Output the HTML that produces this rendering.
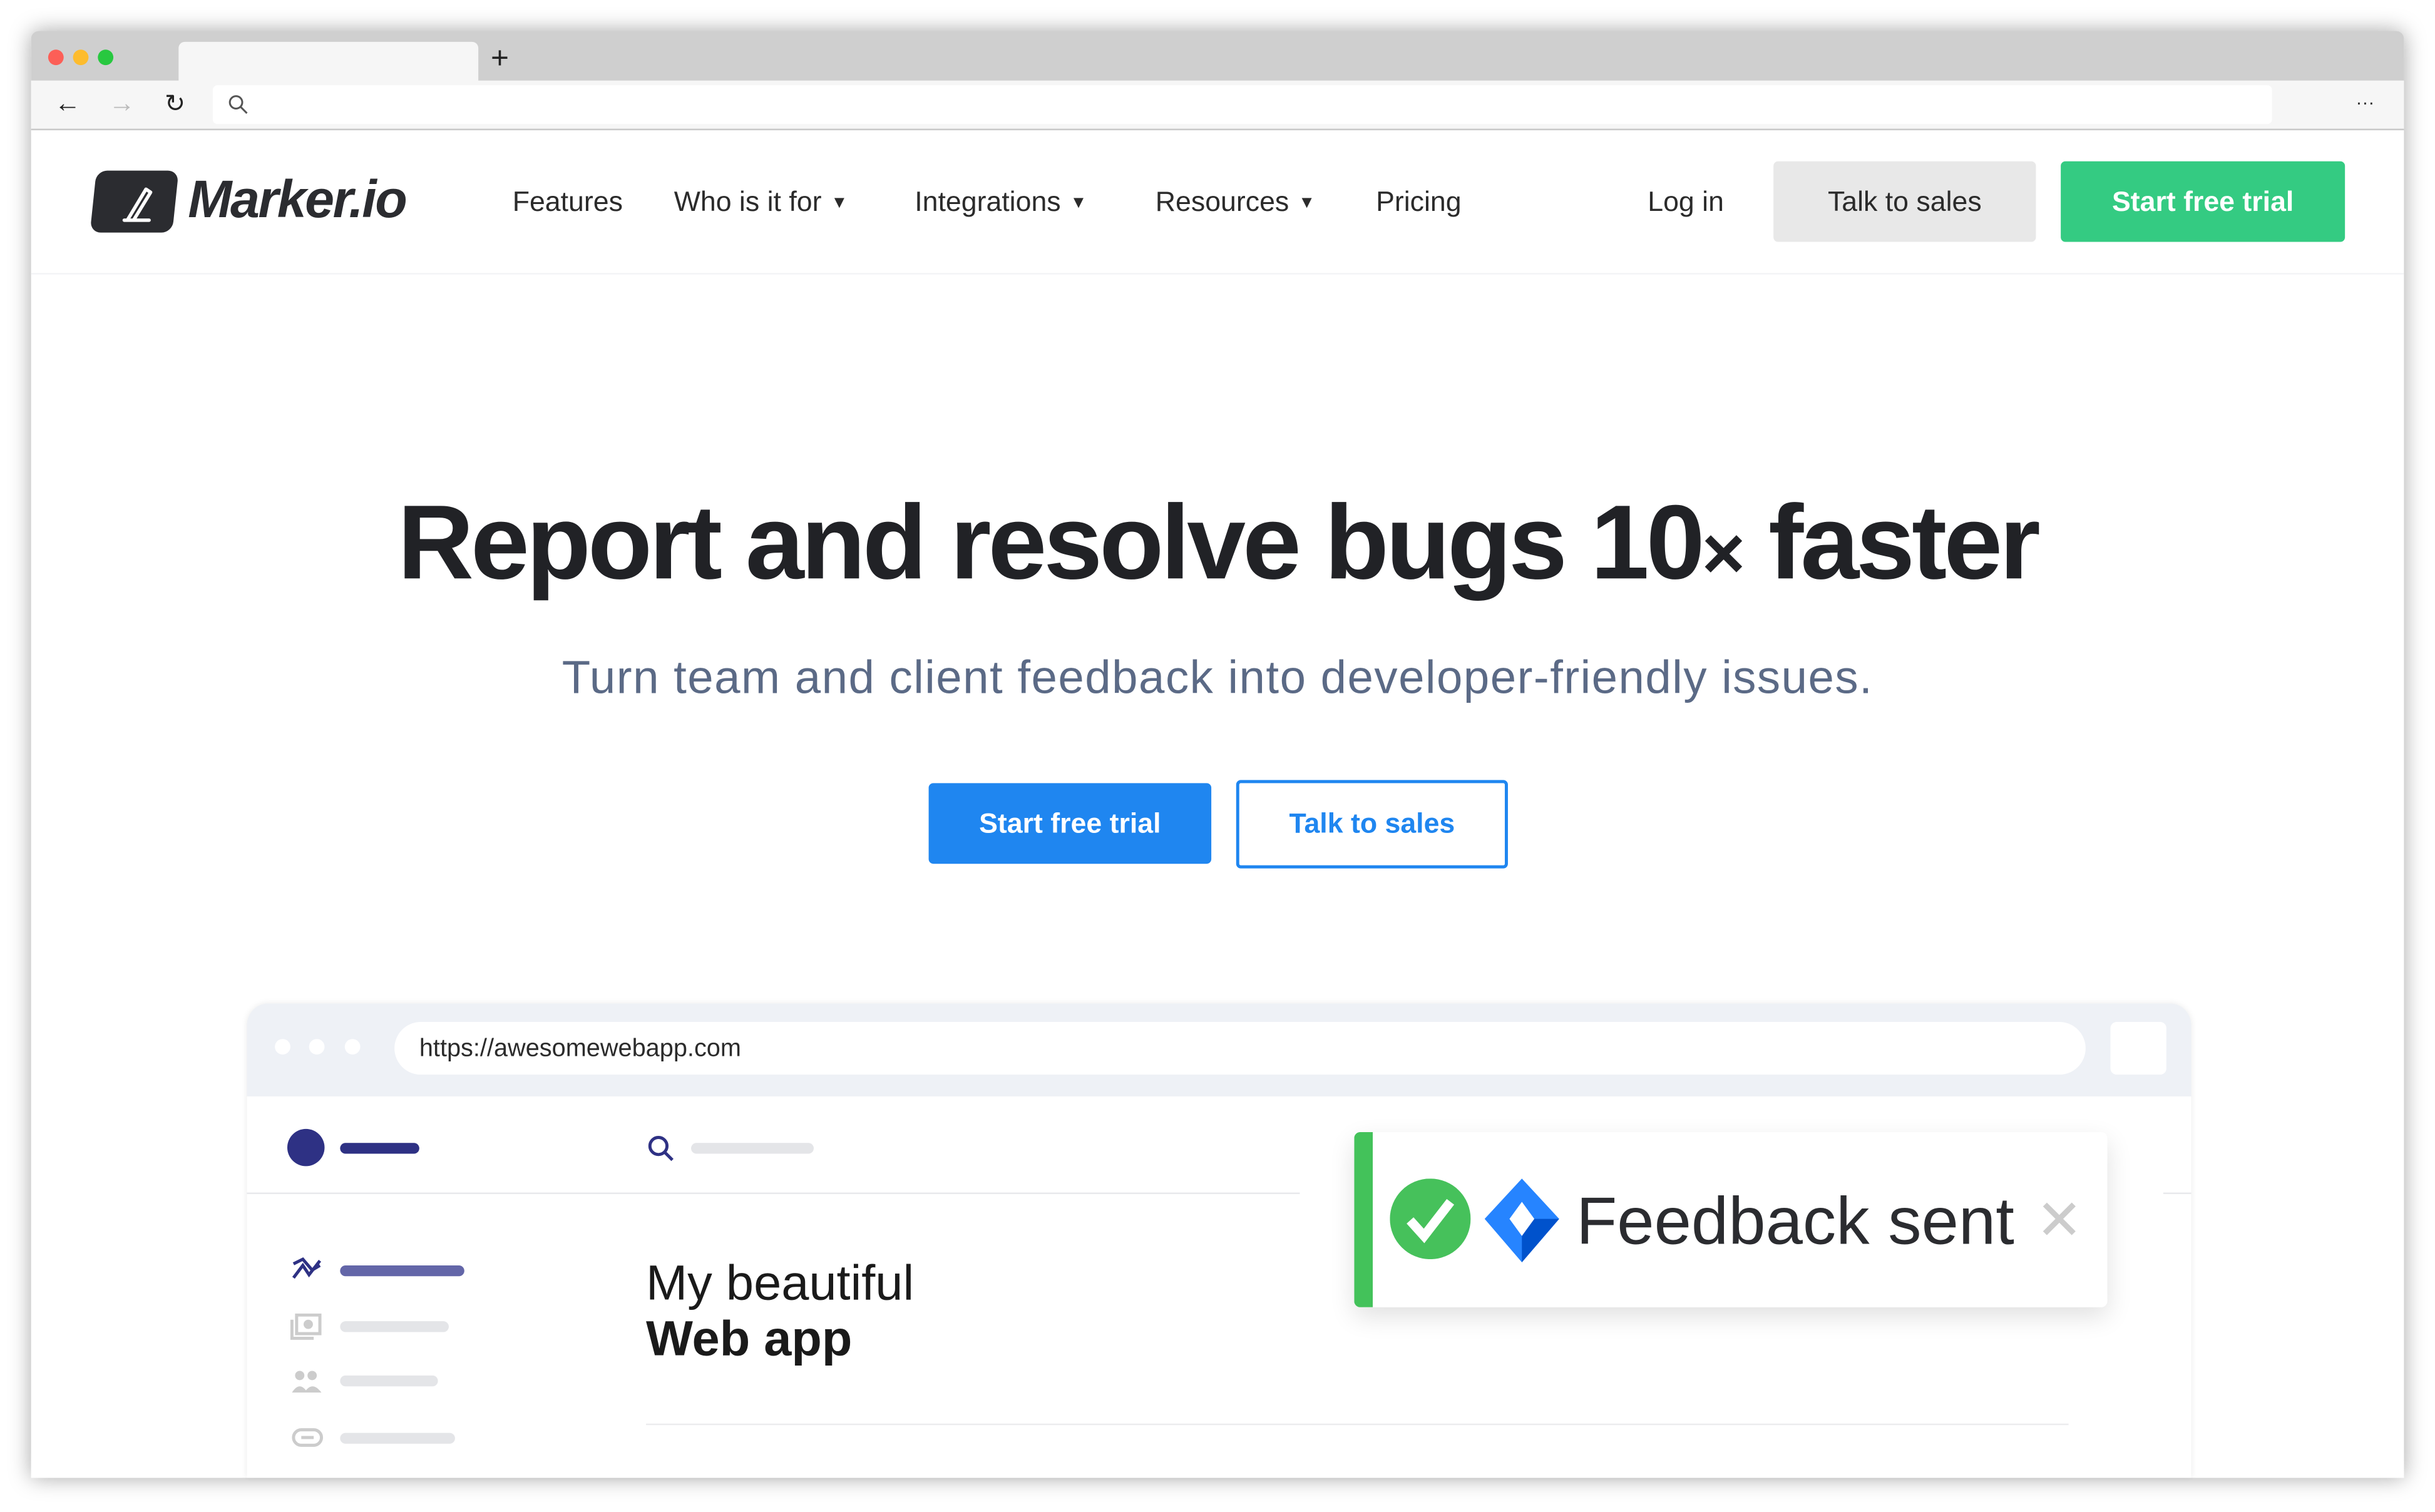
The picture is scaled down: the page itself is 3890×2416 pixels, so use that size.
<!DOCTYPE html>
<html><head><meta charset="utf-8"><style>
html,body{margin:0;padding:0;background:#fff;width:3890px;height:2416px;overflow:hidden;font-family:"Liberation Sans",sans-serif}
#s{position:absolute;left:0;top:0;width:1568px;height:975px;transform-origin:0 0;transform:scale(2.4809,2.4779)}
.a{position:absolute}
.win{left:20px;top:20px;width:1528px;height:933px;background:#fff;box-shadow:0 0 14px rgba(0,0,0,.35);border-radius:5px 5px 0 0;overflow:hidden}
.nav{font-size:18px;color:#2b2b2b;top:120px}
.tri{font-size:11px;margin-left:6px;vertical-align:2px}
.bar{position:absolute;height:7px;border-radius:4px;background:#e4e5e8}
</style></head><body><div id="s">
<div class="a win">
 <div class="a" style="left:0;top:0;width:1528px;height:32px;background:#cfcfcf"></div>
 <div class="a" style="left:11px;top:12px;width:10px;height:10px;border-radius:50%;background:#fc5f57"></div>
 <div class="a" style="left:27px;top:12px;width:10px;height:10px;border-radius:50%;background:#fdbc2e"></div>
 <div class="a" style="left:43px;top:12px;width:10px;height:10px;border-radius:50%;background:#28c840"></div>
 <div class="a" style="left:95px;top:7px;width:193px;height:26px;background:#f6f6f6;border-radius:4px 4px 0 0"></div>
 <div class="a" style="left:296px;top:7px;font-size:20px;color:#222">+</div>
 <div class="a" style="left:0;top:32px;width:1528px;height:31px;background:#f6f6f6;border-bottom:1px solid #c8c8c8"></div>
 <div class="a" style="left:117px;top:35px;width:1326px;height:25px;background:#fff;border-radius:3px"></div>
 <div class="a" style="left:15px;top:37px;font-size:17px;color:#222">←</div>
 <div class="a" style="left:50px;top:37px;font-size:17px;color:#bbb">→</div>
 <div class="a" style="left:86px;top:37px;font-size:16px;color:#222">↻</div>
 <svg class="a" style="left:127px;top:41px" width="14" height="14"><circle cx="5" cy="5" r="4" fill="none" stroke="#555" stroke-width="1.2"/><path d="M8 8l4 4" stroke="#555" stroke-width="1.2"/></svg>
 <div class="a" style="left:1497px;top:39px;font-size:12px;color:#333">···</div>
 <div class="a" style="left:0;top:156px;width:1528px;height:1px;background:#f3f4f6"></div>
</div>
<!-- logo -->
<div class="a" style="left:60px;top:110px;width:53px;height:40px;background:#2b2c30;border-radius:7px;transform:skewX(-6deg)"></div>
<svg class="a" style="left:60px;top:110px" width="53" height="40"><path d="M22 32 L34 12 L37 14 L26 32 Z M20 32 H36" fill="none" stroke="#fff" stroke-width="2.2" stroke-linejoin="round" stroke-linecap="round"/></svg>
<div class="a" style="left:121px;top:110px;font-size:34px;font-weight:bold;font-style:italic;color:#2b2c30;letter-spacing:-1px">Marker.io</div>
<div class="a nav" style="left:330px">Features</div>
<div class="a nav" style="left:434px">Who is it for<span class="tri">▼</span></div>
<div class="a nav" style="left:589px">Integrations<span class="tri">▼</span></div>
<div class="a nav" style="left:744px">Resources<span class="tri">▼</span></div>
<div class="a nav" style="left:886px">Pricing</div>
<div class="a nav" style="left:1061px">Log in</div>
<div class="a" style="left:1142px;top:104px;width:169px;height:52px;background:#e8e8e8;border-radius:3px;font-size:18px;color:#2b2b2b;text-align:center;line-height:52px">Talk to sales</div>
<div class="a" style="left:1327px;top:104px;width:183px;height:52px;background:#34cb82;border-radius:3px;font-size:18px;font-weight:bold;color:#fff;text-align:center;line-height:52px">Start free trial</div>
<!-- hero -->
<div class="a" style="left:0;top:311px;width:1568px;text-align:center;font-size:68px;font-weight:bold;color:#212226;letter-spacing:-2px">Report and resolve bugs 10<span style="font-size:48px">×</span> faster</div>
<div class="a" style="left:0;top:421px;width:1568px;text-align:center;font-size:30px;color:#5b6a86;letter-spacing:.6px">Turn team and client feedback into developer-friendly issues.</div>
<div class="a" style="left:598px;top:505px;width:182px;height:52px;background:#1f86f0;border-radius:3px;font-size:18px;font-weight:bold;color:#fff;text-align:center;line-height:52px">Start free trial</div>
<div class="a" style="left:796px;top:503px;width:171px;height:53px;border:2px solid #1f86f0;border-radius:3px;font-size:18px;font-weight:bold;color:#1f86f0;text-align:center;line-height:53px">Talk to sales</div>
<!-- mockup -->
<div class="a" style="left:159px;top:647px;width:1252px;height:306px;background:#fff;border-radius:14px 14px 0 0;box-shadow:0 0 4px rgba(0,0,0,.08);overflow:hidden">
 <div class="a" style="left:0;top:0;width:1252px;height:60px;background:#eef1f6"></div>
 <div class="a" style="left:18px;top:23px;width:10px;height:10px;border-radius:50%;background:#fff"></div>
 <div class="a" style="left:40px;top:23px;width:10px;height:10px;border-radius:50%;background:#fff"></div>
 <div class="a" style="left:63px;top:23px;width:10px;height:10px;border-radius:50%;background:#fff"></div>
 <div class="a" style="left:95px;top:12px;width:1089px;height:34px;background:#fff;border-radius:17px"></div>
 <div class="a" style="left:111px;top:21px;font-size:16px;color:#2b2b2b">https://awesomewebapp.com</div>
 <div class="a" style="left:1200px;top:12px;width:36px;height:34px;background:#fff;border-radius:4px"></div>
 <div class="a" style="left:26px;top:81px;width:24px;height:24px;border-radius:50%;background:#2e3184"></div>
 <div class="a" style="left:60px;top:90px;width:51px;height:7px;border-radius:4px;background:#2e3184"></div>
 <svg class="a" style="left:257px;top:84px" width="20" height="20"><circle cx="8" cy="8" r="5.5" fill="none" stroke="#2e3184" stroke-width="2"/><path d="M12 12l5 5" stroke="#2e3184" stroke-width="2"/></svg>
 <div class="bar" style="left:286px;top:90px;width:79px"></div>
 <div class="a" style="left:0;top:122px;width:678px;height:1px;background:#e8e9ec"></div>
 <div class="a" style="left:1234px;top:122px;width:18px;height:1px;background:#e8e9ec"></div>
 <svg class="a" style="left:28px;top:163px" width="22" height="16"><path d="M2 14 L8 6 L12 12 L19 3 M2 5 L8 2 L14 9 L19 6" fill="none" stroke="#2e3184" stroke-width="2"/></svg>
 <div class="bar" style="left:60px;top:169px;width:80px;background:#6366a8"></div>
 <svg class="a" style="left:27px;top:200px" width="22" height="18"><rect x="5" y="1" width="15" height="12" fill="none" stroke="#ccc" stroke-width="2"/><circle cx="12.5" cy="7" r="3" fill="#ccc"/><path d="M2 4 V16 H16" fill="none" stroke="#ccc" stroke-width="2"/></svg>
 <div class="bar" style="left:60px;top:205px;width:70px"></div>
 <svg class="a" style="left:28px;top:235px" width="22" height="18"><circle cx="6" cy="5" r="3" fill="#ccc"/><circle cx="14" cy="5" r="3" fill="#ccc"/><path d="M1 16 Q6 8 11 16 Z M9 16 Q14 8 20 16 Z" fill="#ccc"/></svg>
 <div class="bar" style="left:60px;top:240px;width:63px"></div>
 <svg class="a" style="left:28px;top:272px" width="22" height="16"><rect x="2" y="3" width="18" height="10" rx="5" fill="none" stroke="#ccc" stroke-width="2"/><path d="M7 8 H15" stroke="#ccc" stroke-width="2"/></svg>
 <div class="bar" style="left:60px;top:277px;width:74px"></div>
 <div class="a" style="left:257px;top:162px;font-size:32px;color:#1a1a1a;line-height:36px">My beautiful<br><b>Web app</b></div>
 <div class="a" style="left:257px;top:271px;width:916px;height:1px;background:#ececee"></div>
</div>
<!-- toast -->
<div class="a" style="left:872px;top:730px;width:485px;height:113px;background:#fff;border-radius:4px;box-shadow:0 6px 16px rgba(0,0,0,.12);border-left:12px solid #43c25a;box-sizing:border-box"></div>
<svg class="a" style="left:895px;top:760px" width="52" height="52"><circle cx="26" cy="26" r="26" fill="#46c15b"/><path d="M13 27 L22 37 L39 15" fill="none" stroke="#fff" stroke-width="6"/></svg>
<svg class="a" style="left:954px;top:759px" width="52" height="56"><path d="M26 1 L50 27 L26 55 L2 27 Z" fill="#2684ff"/><path d="M26 27 L50 27 L26 55 L26 41 Z" fill="#0052cc"/><path d="M26 16 L34 27 L26 38 L18 27 Z" fill="#fff"/></svg>
<div class="a" style="left:1015px;top:764px;font-size:43px;color:#2b2c30">Feedback sent</div>
<div class="a" style="left:1311px;top:766px;font-size:36px;color:#ccc">✕</div>
</div></body></html>
